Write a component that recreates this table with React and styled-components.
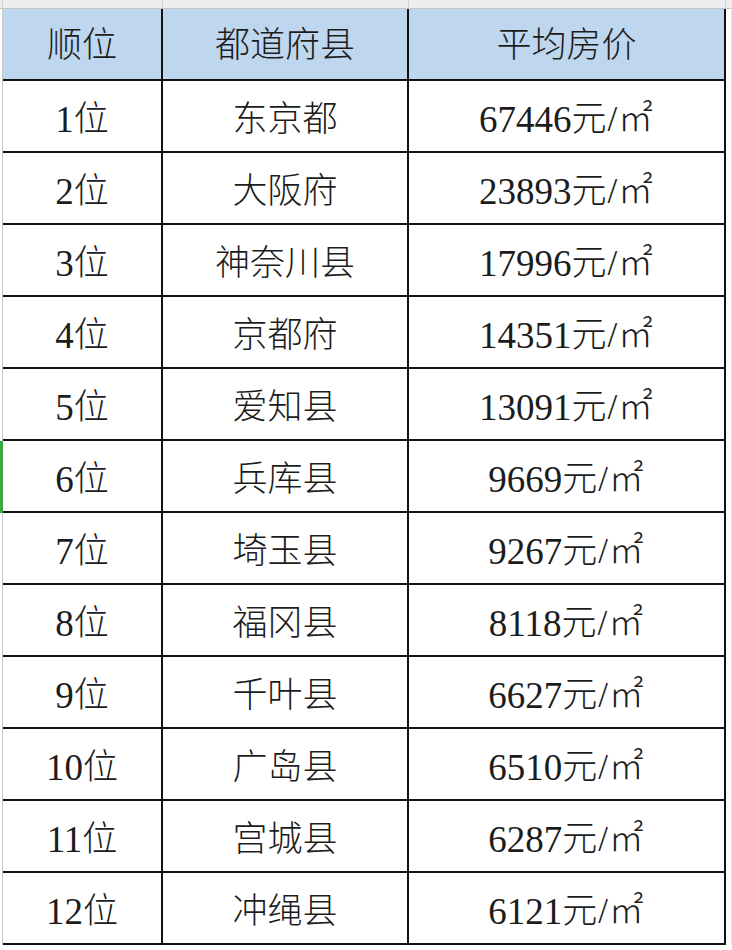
import React from "react";
import styled, { createGlobalStyle } from "styled-components";

const Global = createGlobalStyle`
  html, body { margin: 0; padding: 0; background: #ffffff; }
  body { width: 732px; height: 950px; overflow: hidden; }
`;

const rows = [
  ["1位", "东京都", "67446", "元/㎡"],
  ["2位", "大阪府", "23893", "元/㎡"],
  ["3位", "神奈川县", "17996", "元/㎡"],
  ["4位", "京都府", "14351", "元/㎡"],
  ["5位", "爱知县", "13091", "元/㎡"],
  ["6位", "兵库县", "9669", "元/㎡"],
  ["7位", "埼玉县", "9267", "元/㎡"],
  ["8位", "福冈县", "8118", "元/㎡"],
  ["9位", "千叶县", "6627", "元/㎡"],
  ["10位", "广岛县", "6510", "元/㎡"],
  ["11位", "宫城县", "6287", "元/㎡"],
  ["12位", "冲绳县", "6121", "元/㎡"],
];

const Sheet = styled.div`
  display: grid;
  grid-template-columns: 3px 160px 246px 317px 1fr;
  grid-template-rows: 9px;
  grid-auto-rows: 72px;
  width: 732px;
  font-family: "Liberation Serif", "Noto Sans CJK SC", serif;
  color: #1c1c1c;
`;

const StripCell = styled.div`
  background: #eeeeee;
  border-bottom: 1px solid #c4c4c4;
  border-right: 1px solid ${(p) => (p.$last ? "transparent" : "#d2d2d2")};
`;

const Gutter = styled.div`
  background: ${(p) => (p.$active ? "#3aa83f" : "#ffffff")};
  border-right: 1px solid ${(p) => (p.$active ? "#3aa83f" : "#c8c8c8")};
`;

const Cell = styled.div`
  display: flex;
  align-items: center;
  justify-content: center;
  background: ${(p) => (p.$head ? "#bed6ee" : "#ffffff")};
  border-right: 2px solid #111111;
  border-bottom: 2px solid #111111;
  font-size: 35px;
  font-weight: 300;
  line-height: 1;
  padding-top: ${(p) => (p.$head ? "2px" : "6px")};
  white-space: nowrap;
`;

const Num = styled.span`
  font-size: 37px;
`;

const Unit = styled.span`
  letter-spacing: 1px;
`;

const Trailing = styled.div`
  background: #ffffff;
  border-right: 1px solid #e4e4e4;
`;

export default function App() {
  return (
    <>
      <Global />
      <Sheet>
        <StripCell />
        <StripCell />
        <StripCell />
        <StripCell />
        <StripCell $last />

        <Gutter />
        <Cell $head>顺位</Cell>
        <Cell $head>都道府县</Cell>
        <Cell $head>平均房价</Cell>
        <Trailing />

        {rows.map((r, i) => (
          <React.Fragment key={r[0]}>
            <Gutter $active={i === 5} />
            <Cell>
              <Num>{r[0].replace("位", "")}</Num>位
            </Cell>
            <Cell>{r[1]}</Cell>
            <Cell>
              <Num>{r[2]}</Num>
              <Unit>{r[3]}</Unit>
            </Cell>
            <Trailing />
          </React.Fragment>
        ))}
      </Sheet>
    </>
  );
}
